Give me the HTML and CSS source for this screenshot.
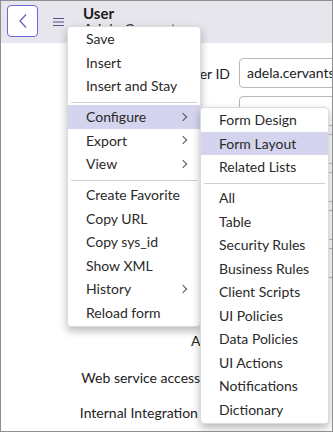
FILE: index.html
```html
<!DOCTYPE html>
<html lang="en">
<head>
    <meta charset="UTF-8">
    <meta name="viewport" content="width=device-width, initial-scale=1.0">
    <title>User - Adela Cervantsz</title>
    <link rel="stylesheet" href="styles.css">
</head>
<body>
    <div class="frame">
        <header class="topbar">
            <button class="back-btn" aria-label="Back">
                <svg width="10" height="16" viewBox="0 0 10 16"><polyline points="8,1.5 2,8 8,14.5" fill="none" stroke="#5b5bc8" stroke-width="1.2"/></svg>
            </button>
            <span class="menu-icon">
                <svg width="11" height="8" viewBox="0 0 11 8"><path d="M0 0.5H11M0 4H11M0 7.5H11" stroke="#55558a" stroke-width="1.2"/></svg>
            </span>
            <div class="title">
                <div class="title-main">User</div>
                <div class="title-sub">Adela Cervantsz</div>
            </div>
        </header>

        <main class="form">
            <div class="row">
                <label class="row-label">User ID</label>
                <div class="field">adela.cervantsz</div>
            </div>
            <div class="row">
                <label class="row-label">First name</label>
                <div class="field"></div>
            </div>
            <div class="row">
                <label class="row-label">Last name</label>
                <div class="field"></div>
            </div>
            <div class="row">
                <label class="row-label">Title</label>
                <div class="field"></div>
            </div>
            <div class="row">
                <label class="row-label">Department</label>
                <div class="field"></div>
            </div>
            <div class="row">
                <label class="row-label">Password</label>
                <div class="field"></div>
            </div>
            <div class="row check-row first-check">
                <label class="row-label">Password needs reset</label>
                <span class="checkbox"></span>
            </div>
            <div class="row check-row">
                <label class="row-label">Active</label>
                <span class="checkbox"></span>
            </div>
            <div class="row check-row">
                <label class="row-label">Web service access only</label>
                <span class="checkbox"></span>
            </div>
            <div class="row check-row last-check">
                <label class="row-label">Internal Integration User</label>
                <span class="checkbox"></span>
            </div>
        </main>

        <div class="context-menu main-menu">
            <div class="menu-item">Save</div>
            <div class="menu-item">Insert</div>
            <div class="menu-item">Insert and Stay</div>
            <div class="menu-sep"></div>
            <div class="menu-item has-sub active">Configure <span class="chev"></span></div>
            <div class="menu-item has-sub">Export <span class="chev"></span></div>
            <div class="menu-item has-sub">View <span class="chev"></span></div>
            <div class="menu-sep"></div>
            <div class="menu-item">Create Favorite</div>
            <div class="menu-item">Copy URL</div>
            <div class="menu-item">Copy sys_id</div>
            <div class="menu-item">Show XML</div>
            <div class="menu-item has-sub">History <span class="chev"></span></div>
            <div class="menu-item">Reload form</div>
        </div>

        <div class="context-menu sub-menu">
            <div class="menu-item">Form Design</div>
            <div class="menu-item active">Form Layout</div>
            <div class="menu-item">Related Lists</div>
            <div class="menu-sep"></div>
            <div class="menu-item">All</div>
            <div class="menu-item">Table</div>
            <div class="menu-item">Security Rules</div>
            <div class="menu-item">Business Rules</div>
            <div class="menu-item">Client Scripts</div>
            <div class="menu-item">UI Policies</div>
            <div class="menu-item">Data Policies</div>
            <div class="menu-item">UI Actions</div>
            <div class="menu-item">Notifications</div>
            <div class="menu-item">Dictionary</div>
        </div>
    </div>
</body>
</html>
```

FILE: styles.css
```css
body {
    margin: 0;
    font-family: Lato, "Open Sans", sans-serif;
    color: #222;
    background: #fff;
}

.frame {
    position: relative;
    width: 333px;
    height: 432px;
    box-sizing: border-box;
    border: 1px solid #8e8e8e;
    overflow: hidden;
    background: #fff;
}

.topbar {
    display: flex;
    align-items: flex-start;
    height: 42px;
    padding: 4px 0 0 6px;
    box-sizing: border-box;
    background: #e6e6ec;
}

.back-btn {
    display: flex;
    align-items: center;
    justify-content: center;
    width: 31px;
    height: 32px;
    padding: 0;
    border: 1px solid #6a6ad0;
    border-radius: 4px;
    background: #fff;
}

.menu-icon {
    display: flex;
    margin: 13px 0 0 15px;
}

.title {
    margin-left: 19px;
    line-height: 16px;
    font-size: 15px;
}

.title-main {
    font-weight: 700;
    color: #1c1c1c;
}

.title-sub {
    color: #333;
}

/* form behind the menus */
.form {
    display: flex;
    flex-direction: column;
    padding-top: 15px;
}

.row {
    display: flex;
    align-items: center;
    height: 30px;
    margin-bottom: 8px;
    font-size: 14px;
}

.row-label {
    width: 229px;
    flex: none;
    text-align: right;
    white-space: nowrap;
    color: #222;
}

.field {
    flex: none;
    width: 140px;
    height: 30px;
    margin-left: 9px;
    box-sizing: border-box;
    border: 1px solid #b8b8b8;
    border-radius: 4px;
    padding: 0 7px;
    line-height: 28px;
    white-space: nowrap;
    overflow: hidden;
    color: #222;
}

.check-row {
    height: 37px;
    margin-bottom: 0;
}

.first-check {
    margin-top: -1.5px;
}

.last-check {
    margin-top: -2px;
}

.checkbox {
    width: 16px;
    height: 16px;
    margin-left: 9px;
    border: 1px solid #888;
    border-radius: 3px;
}

/* context menus */
.context-menu {
    position: absolute;
    display: flex;
    flex-direction: column;
    padding: 0 0 2px;
    background: #fff;
    border: 1px solid #dcdcdc;
    border-radius: 4px;
    box-shadow: 0 4px 9px rgba(0, 0, 0, 0.28);
    font-size: 14px;
    color: #2a2a2a;
}

.main-menu {
    left: 66px;
    top: 25px;
    width: 132px;
}

.sub-menu {
    left: 199px;
    top: 106px;
    width: 127px;
}

.menu-item {
    display: flex;
    align-items: center;
    justify-content: space-between;
    height: 23.5px;
    padding: 0 14px 0 18px;
    white-space: nowrap;
}

.menu-item.active {
    background: #d4d4ee;
}

.menu-sep {
    margin: 4.5px 3px 2px;
    border-top: 1px solid #cfcfcf;
}

.chev {
    width: 5px;
    height: 5px;
    border-top: 1px solid #555;
    border-right: 1px solid #555;
    transform: rotate(45deg);
}
```
